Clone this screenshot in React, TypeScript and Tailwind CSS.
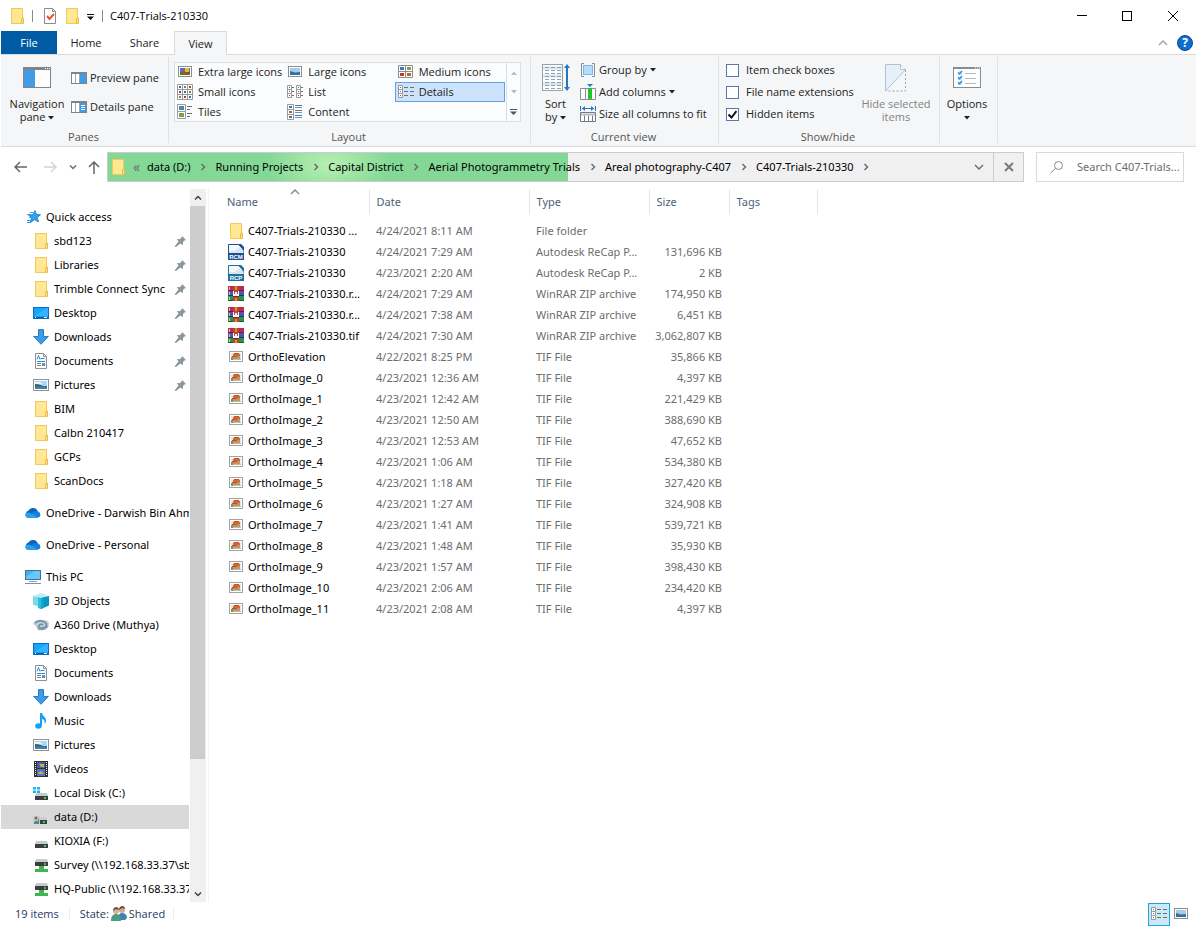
import { Fragment, type ReactNode } from 'react';

/* ---------- icons ---------- */

function FolderIcon() {
  return (
    <svg width="16" height="16" viewBox="0 0 16 16" className="shrink-0">
      <path d="M2.5 0.5h11v15h-11z" fill="#ffe793" stroke="#eecb58" />
      <path d="M12.5 15.500v-4.500l1-1h1v5.500z" fill="#fbdc78" stroke="#e8be48" />
    </svg>
  );
}

function StarIcon() {
  return (
    <svg width="16" height="16" viewBox="0 0 16 16" className="shrink-0">
      <path d="M10 1.500l1.500 4 4 .2-3.200 2.800 1.200 4.500L9.500 10.700l-4.300 3 1.300-4.900L3.500 6l4.500-.3z" fill="#2fa2ee" stroke="#1878c4" strokeWidth=".8" />
      <path d="M5 3.500h3M2 5.500h4M4 8.500h2M2 11.500h3M2 13.500h3" stroke="#2f9be8" strokeWidth="1" />
    </svg>
  );
}

function DesktopIcon() {
  return (
    <svg width="16" height="16" viewBox="0 0 16 16" className="shrink-0">
      <rect x=".5" y="2.500" width="15" height="11" fill="#17a3fb" stroke="#0c6cb5" />
      <path d="M1 11l13-8h1v8z" fill="#35b2ff" />
      <path d="M1 12.500h14" stroke="#0a5c9e" />
      <path d="M2 12.500h1M11 12.500h3" stroke="#fff" />
    </svg>
  );
}

function DownloadIcon() {
  return (
    <svg width="16" height="16" viewBox="0 0 16 16" className="shrink-0">
      <path d="M5.500.5h5v7h4.800L8 15.300.7 7.500h4.800z" fill="#3d9be9" stroke="#2a7cc6" />
    </svg>
  );
}

function DocumentIcon() {
  return (
    <svg width="16" height="16" viewBox="0 0 16 16" className="shrink-0">
      <path d="M2.500.5h8l3 3v12h-11z" fill="#fff" stroke="#8a8f94" />
      <path d="M10.500.5v3h3" fill="none" stroke="#8a8f94" />
      <path d="M4 6.500l1.500-4L7 6.500" fill="none" stroke="#2f87d0" />
      <path d="M7.500 5.500h4M4 8.500h8" stroke="#2f87d0" />
      <path d="M4 10.500h4M4 12.500h4M9 12.500h3" stroke="#7d8388" />
      <rect x="9" y="10" width="3" height="2" fill="#4b9bd8" />
    </svg>
  );
}

function PictureIcon() {
  return (
    <svg width="16" height="16" viewBox="0 0 16 16" className="shrink-0">
      <rect x=".5" y="2.500" width="15" height="11" fill="#fff" stroke="#929292" />
      <rect x="2" y="4" width="12" height="8" fill="#a9d7f7" />
      <path d="M2 5h5l3 2H2z" fill="#e8f5fd" />
      <path d="M2 7l4 0.500 4 1.500h4v1H2z" fill="#33625f" />
      <path d="M2 9.500h12V12H2z" fill="#477fae" />
    </svg>
  );
}

function CloudIcon() {
  return (
    <svg width="16" height="16" viewBox="0 0 16 16" className="shrink-0">
      <path d="M1 9.500a3.500 3.500 0 0 1 2.500-4A5.200 5.200 0 0 1 12.800 6.500L14 10 5 12z" fill="#0a66bd" />
      <path d="M3 12.500l5-5a3.800 3.800 0 0 1 4.800-1A3.300 3.300 0 0 1 14.500 12z" fill="#1681da" />
      <path d="M3.300 13A3 3 0 0 1 .2 9.500c.4-2 3.300-2.600 5-1.500l8.500 4.600a2 2 0 0 1-1 .4z" fill="#28a0ec" />
    </svg>
  );
}

function ThisPcIcon() {
  return (
    <svg width="16" height="16" viewBox="0 0 16 16" className="shrink-0">
      <rect x=".5" y="1.500" width="15" height="9" fill="#3db2fb" stroke="#4a6f8d" />
      <path d="M1 8l8-6h6v8H1z" fill="#66c6ff" />
      <path d="M4 12.500h8" stroke="#8ba3b5" />
      <path d="M0 14.500h16" stroke="#7a93a6" />
    </svg>
  );
}

function CubeIcon() {
  return (
    <svg width="16" height="16" viewBox="0 0 16 16" className="shrink-0">
      <path d="M0 3l8-3 8 3-8 2z" fill="#b8eef5" />
      <path d="M0 3l8 2v11l-3-1V13l-5-1z" fill="#79dbe8" />
      <path d="M5 4.200l3 .8v11l-3-1.200z" fill="#31bfd6" />
      <path d="M16 3L8 5v11l8-3.500z" fill="#0c94ba" />
      <path d="M8 5l3-.8v10.500L8 16z" fill="#0aa9cd" />
    </svg>
  );
}

function A360Icon() {
  return (
    <svg width="16" height="16" viewBox="0 0 16 16" className="shrink-0">
      <path d="M0 7c1-4 5-5 9-4 4-.5 7 1 7 4-.5 4-5 6-9 6-3-.5-4-2-4-4" fill="#bccdd7" />
      <path d="M2 6c3-2.500 7-3 10-.5 3 2 1 5-2 5.500-3 .5-5-.5-4-2 0-1.500 2-2.500 4-1" fill="none" stroke="#6c8798" strokeWidth="1.500" />
      <path d="M5 12c4 1.500 8 0 10-3" fill="none" stroke="#8aa2b1" strokeWidth="1.500" />
    </svg>
  );
}

function MusicIcon() {
  return (
    <svg width="16" height="16" viewBox="0 0 16 16" className="shrink-0">
      <ellipse cx="5.500" cy="13" rx="3.300" ry="2.700" fill="#16a0f5" />
      <path d="M7 0h2c.2 3 4.500 4 4 8-.2 1.500-.8 2.500-1.500 3 .8-3-.8-4.500-2.500-5v7H7z" fill="#16a0f5" />
    </svg>
  );
}

function VideoIcon() {
  return (
    <svg width="16" height="16" viewBox="0 0 16 16" className="shrink-0">
      <rect x="1" y="0" width="14" height="16" fill="#2d2f33" />
      <rect x="4" y="1" width="8" height="6" fill="#3e62b0" />
      <rect x="4" y="8" width="8" height="7" fill="#4c7ac9" />
      <path d="M6 3h5v3H8zM5 12l3-2 3 3H6z" fill="#e0a63c" />
      <path d="M2.500 1v14M13.500 1v14" stroke="#f1f1f1" strokeDasharray="1 1" />
    </svg>
  );
}

function DriveIcon({ kind }: { kind: 'windows' | 'shared' | 'plain' | 'network' }) {
  const y = kind === 'network' ? 2 : 8;
  const x = kind === 'shared' ? 7 : 2;
  const w = kind === 'shared' ? 7 : 13;
  return (
    <svg width="16" height="16" viewBox="0 0 16 16" className="shrink-0">
      {kind === 'windows' && <path d="M0 2h3v2.500H0zM4 2h3v2.500H4zM0 5.500h3V8H0zM4 5.500h3V8H4z" fill="#16b4ee" />}
      {kind === 'shared' && (
        <>
          <rect x="0" y="7" width="7" height="8" fill="#c5cdd0" />
          <circle cx="3" cy="9" r="1.500" fill="#8d5f48" />
          <path d="M1 15c0-4 3-4 3-2l2-4v6z" fill="#4a8d85" />
        </>
      )}
      <path d={`M${x + 1} ${y}h${w - 2}l1 3h-${w}z`} fill="#c8cacb" />
      <rect x={x} y={y + 3} width={w} height="4" fill="#3c3d3e" />
      <rect x={x + w - 4} y={y + 4} width="2" height="2" fill="#35d04c" />
      {kind === 'network' && <path d="M6 9h5v3h4v3H2v-3h4z" fill="#42b553" />}
    </svg>
  );
}

function PinIcon() {
  return (
    <svg width="11" height="11" viewBox="0 0 11 11" className="shrink-0">
      <path d="M7 0l4 4-1.500.5L8 6l-.2 3.200L5.500 7.500 1 11H0v-1l3.500-4.500L1.800 3.200 5 3l1.500-1.500z" fill="#8c979e" />
    </svg>
  );
}

function RecapIcon({ label, color }: { label: string; color: string }) {
  return (
    <svg width="16" height="16" viewBox="0 0 16 16" className="shrink-0">
      <path d="M.5.5h10l4.500 4.500v5H.5z" fill="#f6f9fc" stroke={color} />
      <path d="M1 7c5 1 8-1 10-4l4 3v3H1z" fill="#dae5ed" />
      <path d="M10 0h3l3 3v4z" fill={color} />
      <rect x="0" y="9" width="16" height="7" fill={color} />
      <text x="8" y="15" textAnchor="middle" fontSize="6" fontWeight="700" fontFamily="Liberation Sans, sans-serif" fill="#fff">
        {label}
      </text>
    </svg>
  );
}

function WinrarIcon() {
  return (
    <svg width="16" height="16" viewBox="0 0 16 16" className="shrink-0" shapeRendering="crispEdges">
      <rect x="0" y="0" width="16" height="5" fill="#c5265a" />
      <rect x="0" y="5" width="16" height="5" fill="#4f55b8" />
      <rect x="0" y="10" width="16" height="5" fill="#25944c" />
      <rect x="0" y="4" width="16" height="1" fill="#7a1638" />
      <rect x="0" y="9" width="16" height="1" fill="#2c2f72" />
      <rect x="0" y="14" width="16" height="1" fill="#12602c" />
      <path d="M1.500 1v3M1.500 6v3M1.500 11v3" stroke="#d9c77a" />
      <rect x="5" y="0" width="6" height="15" fill="#b9472b" />
      <rect x="7" y="0" width="2" height="4" fill="#d98a3f" />
      <rect x="7" y="12" width="2" height="3" fill="#d98a3f" />
      <path d="M5 5h1v3h1V6h2v2h1V5h1v5H5z" fill="#fff" />
      <rect x="5" y="10" width="6" height="1" fill="#7d2a22" />
    </svg>
  );
}

function TifIcon() {
  return (
    <svg width="16" height="16" viewBox="0 0 16 16" className="shrink-0" shapeRendering="crispEdges">
      <rect x="1" y="2" width="14" height="11" fill="#a3a3a3" />
      <rect x="2" y="3" width="12" height="9" fill="#fff" />
      <rect x="3" y="4" width="10" height="7" fill="#dfe8ea" />
      <rect x="6" y="4" width="5" height="1" fill="#c4532a" />
      <rect x="5" y="5" width="7" height="2" fill="#d2692f" />
      <rect x="4" y="7" width="5" height="1" fill="#b9532b" />
      <rect x="9" y="7" width="3" height="3" fill="#b99684" />
      <rect x="5" y="8" width="4" height="2" fill="#d98a50" />
      <rect x="3" y="8" width="2" height="3" fill="#6f9a5b" />
      <rect x="5" y="10" width="8" height="1" fill="#b7c2a5" />
    </svg>
  );
}

function UsersIcon() {
  return (
    <svg width="16" height="16" viewBox="0 0 16 16" className="shrink-0">
      <path d="M7 14c0-6 2-7 4-7s5 1 5 5l-2 2z" fill="#3d84b5" />
      <circle cx="11" cy="4" r="3" fill="#d9a98c" />
      <path d="M8 4c0-5 6-5 6-1l-3-1z" fill="#6b4a36" />
      <path d="M0 15c0-5 2-7 5-7s5 2 5 7z" fill="#4c9b82" />
      <circle cx="5" cy="5" r="3" fill="#dcae92" />
      <path d="M2 5c0-5 6-5 6-1L5 3z" fill="#54555c" />
    </svg>
  );
}

// Small thumbnail in a frame, used by the gallery and by the status bar toggle.
function ThumbIcon({ colorful = false }: { colorful?: boolean }) {
  return (
    <svg width="16" height="16" viewBox="0 0 16 16" className="shrink-0">
      <rect x="1.500" y="2.500" width="13" height="10" fill="#fff" stroke="#8e8e8e" />
      <rect x="3" y="4" width="10" height="7" fill={colorful ? '#4278d0' : '#a2cdf3'} />
      {colorful ? (
        <>
          <path d="M3 8h10v3H3z" fill="#4b7b32" />
          <rect x="8" y="4" width="4" height="4" fill="#f0b928" />
          <rect x="5" y="7" width="3" height="3" fill="#d93825" />
          <rect x="10" y="8" width="3" height="2" fill="#a54724" />
        </>
      ) : (
        <path d="M3 7l5 1.500 5-.5v3H3z" fill="#3a6f91" />
      )}
    </svg>
  );
}

function MediumIcon() {
  return (
    <svg width="16" height="16" viewBox="0 0 16 16" className="shrink-0">
      <path d="M.5 1.500h7v6h-7zM7.500 1.500h7v6h-7zM.5 7.500h7v6h-7zM7.500 7.500h7v6h-7z" fill="#fff" stroke="#8e8e8e" />
      <rect x="2" y="3" width="4" height="3" fill="#3d7cb8" />
      <rect x="9" y="3" width="4" height="3" fill="#7fa05c" />
      <rect x="2" y="9" width="4" height="3" fill="#c6362c" />
      <rect x="9" y="9" width="4" height="3" fill="#a8702c" />
    </svg>
  );
}

function SmallIcon() {
  return (
    <svg width="16" height="16" viewBox="0 0 16 16" className="shrink-0">
      <path d="M.5.5h15v15H.5zM5.500.5v15M10.500.5v15M.5 5.500h15M.5 10.500h15" fill="#fff" stroke="#9a9a9a" />
      <path d="M2 3h2M7 8h2M12 13h2" stroke="#2f6eb0" strokeWidth="2" />
      <path d="M7 3h2M12 8h2M2 13h2" stroke="#5d8f5c" strokeWidth="2" />
      <path d="M12 3h2M2 8h2M7 13h2" stroke="#b4372c" strokeWidth="2" />
    </svg>
  );
}

function ListIcon() {
  return (
    <svg width="16" height="16" viewBox="0 0 16 16" className="shrink-0">
      <path d="M.5 1.500h4v12h-4zM.5 5.500h4M.5 9.500h4M9.500 1.500h4v12h-4zM9.500 5.500h4M9.500 9.500h4" fill="#fff" stroke="#9a9a9a" />
      <path d="M5 3.500h2M5 7.500h2M5 11.500h2M14 3.500h2M14 7.500h2M14 11.500h2" stroke="#6e6e6e" />
      <path d="M2 3.500h1M11 3.500h1" stroke="#2f8f56" />
      <path d="M2 7.500h1M11 7.500h1" stroke="#3b79d6" />
      <path d="M2 11.500h1M11 11.500h1" stroke="#d12f2f" />
    </svg>
  );
}

function DetailsIcon() {
  return (
    <svg width="16" height="16" viewBox="0 0 16 16" className="shrink-0">
      <path d="M.5 1.500h4v12h-4zM.5 5.500h4M.5 9.500h4" fill="#fff" stroke="#9a9a9a" />
      <path d="M6 3.500h4M6 7.500h4M6 11.500h4M12 3.500h4M12 7.500h4M12 11.500h4" stroke="#6e6e6e" />
      <path d="M2 3.500h1" stroke="#2f8f56" />
      <path d="M2 7.500h1" stroke="#3b79d6" />
      <path d="M2 11.500h1" stroke="#d12f2f" />
    </svg>
  );
}

function TilesIcon() {
  return (
    <svg width="16" height="16" viewBox="0 0 16 16" className="shrink-0">
      <path d="M.5.5h8v7h-8zM.5 7.500h8v7h-8z" fill="#fff" stroke="#9a9a9a" />
      <rect x="2" y="2" width="5" height="4" fill="#4d84b5" />
      <rect x="2" y="9" width="5" height="4" fill="#8a9a45" />
      <path d="M10 2.500h5M10 5.500h3M10 9.500h5M10 12.500h3" stroke="#6e6e6e" />
    </svg>
  );
}

function ContentIcon() {
  return (
    <svg width="16" height="16" viewBox="0 0 16 16" className="shrink-0">
      <path d="M.5.5h6v15h-6zM.5 5.500h6M.5 10.500h6" fill="#fff" stroke="#9a9a9a" />
      <path d="M2 3h3M2 13h3" stroke="#3f77a8" strokeWidth="2" />
      <path d="M2 8h3" stroke="#9a6a3b" strokeWidth="2" />
      <path d="M8 1.500h7M8 6.500h7M8 11.500h7" stroke="#6e6e6e" />
      <path d="M8 3.500h7M8 8.500h7M8 13.500h7" stroke="#5797e6" />
    </svg>
  );
}

function NavPaneIcon() {
  return (
    <svg width="28" height="22" viewBox="0 0 28 22">
      <rect x=".5" y=".5" width="27" height="20" fill="#fdfdfd" stroke="#808488" />
      <rect x="0" y="0" width="28" height="3" fill="#808488" />
      <path d="M22 1.500h1M24 1.500h1M26 1.500h1" stroke="#fff" />
      <rect x="1" y="3" width="11" height="17" fill="#429be5" />
    </svg>
  );
}

function SidePaneIcon({ lines = false }: { lines?: boolean }) {
  return (
    <svg width="16" height="12" viewBox="0 0 16 12" className="shrink-0">
      <rect x=".5" y=".5" width="15" height="11" fill="#fff" stroke="#808488" />
      <rect x="0" y="0" width="16" height="2" fill="#808488" />
      <path d="M4.500 2v9M8.500 2v9" stroke="#a3a6a9" />
      <rect x="9" y="2" width="6" height="9" fill="#429be5" />
      {lines && <path d="M10 4.500h4M10 6.500h4M10 8.500h4" stroke="#fff" />}
    </svg>
  );
}

function SortIcon() {
  return (
    <svg width="28" height="28" viewBox="0 0 28 28">
      <rect x=".5" y=".5" width="20" height="26" fill="#fff" stroke="#9b9fa3" />
      <path d="M1 4h19M1 12h19M1 20h19" stroke="#cfe8f5" strokeWidth="3" />
      <path d="M3 3.500h16M3 6.500h16M3 9.500h16M3 12.500h16M3 15.500h16M3 18.500h16M3 21.500h16M3 24.500h16" stroke="#9b9fa3" strokeDasharray="4 2" />
      <path d="M25 2v24" stroke="#2478c0" strokeWidth="2" />
      <path d="M22 4l3-4 3 4zM22 23l3 4 3-4z" fill="#2478c0" />
    </svg>
  );
}

function GroupIcon() {
  return (
    <svg width="16" height="16" viewBox="0 0 16 16" className="shrink-0">
      <path d="M4 1.500H1.500v13H4M12 1.500h2.500v13H12" fill="none" stroke="#8b8f93" />
      <rect x="3.500" y="3.500" width="9" height="9" fill="#b4dcfb" stroke="#78b8ec" />
    </svg>
  );
}

function AddColumnIcon() {
  return (
    <svg width="16" height="16" viewBox="0 0 16 16" className="shrink-0">
      <path d="M.5 4.500h15v11H.5zM5.500 4.500v11" fill="#fff" stroke="#8b8f93" />
      <rect x="8" y="4" width="4" height="11" fill="#23c52b" />
      <path d="M7 0h6l-3 3z" fill="#2478c0" />
    </svg>
  );
}

function FitColumnsIcon() {
  return (
    <svg width="16" height="16" viewBox="0 0 16 16" className="shrink-0">
      <path d="M.5 0v5M15.500 0v5M2 2.500h12" stroke="#2478c0" />
      <path d="M5 0L2 2.500 5 5zM11 0l3 2.500L11 5z" fill="#2478c0" />
      <path d="M.5 6.500h15v9H.5zM4.500 9.500v6M8.500 9.500v6M12.500 9.500v6" fill="#fff" stroke="#77797c" />
      <path d="M1 8.500h14" stroke="#b9bcbe" strokeWidth="2" />
    </svg>
  );
}

function HideItemsIcon() {
  return (
    <svg width="22" height="28" viewBox="0 0 22 28">
      <path d="M.5.5h15l5 5L.5 27z" fill="#e6effa" />
      <path d="M.5 27V.5h15l5 5L.5 27" fill="none" stroke="#b3bfd3" />
      <path d="M15.500.5v5h5" fill="#fff" stroke="#b3bfd3" />
      <path d="M20.500 6v21H1" fill="none" stroke="#94a5c0" strokeDasharray="2 2" />
    </svg>
  );
}

function OptionsIcon() {
  return (
    <svg width="28" height="22" viewBox="0 0 28 22">
      <rect x=".5" y=".5" width="27" height="20" fill="#fff" stroke="#8a8c8e" />
      <rect x="0" y="0" width="28" height="2" fill="#8a8c8e" />
      <path d="M22 1h1M24 1h1M26 1h1" stroke="#fff" />
      <path d="M5 4h4v4H5zM5 9h4v4H5zM5 14h4v4H5z" fill="#d4e8f8" />
      <path d="M5 5.500l1.500 1.500L9 4M5 10.500L6.500 12 9 9M5 15.500L6.500 17 9 14" fill="none" stroke="#2f91dc" strokeWidth="1.500" />
      <path d="M12 6.500h11M12 11.500h11M12 16.500h11" stroke="#b7b7b7" />
    </svg>
  );
}

function Caret({ className = 'text-[#222]' }: { className?: string }) {
  return (
    <svg width="6" height="4" viewBox="0 0 6 4" className={`inline-block shrink-0 align-middle ${className}`}>
      <path d="M0 0h6L3 3.500z" fill="currentColor" />
    </svg>
  );
}

function Chevron({ dir, className = 'text-[#6d6d6d]' }: { dir: 'up' | 'down' | 'right'; className?: string }) {
  const paths = { up: 'M1 5.500l3-3 3 3', down: 'M1 2.500l3 3 3-3', right: 'M2.500 1l3 3-3 3' };
  return (
    <svg width="8" height="8" viewBox="0 0 8 8" className={`shrink-0 ${className}`}>
      <path d={paths[dir]} fill="none" stroke="currentColor" strokeWidth="1.500" />
    </svg>
  );
}

// Wider, thinner chevron for the ribbon toggle, the address list and the scroll bar.
function WideChevron({ dir, className = '' }: { dir: 'up' | 'down'; className?: string }) {
  return (
    <svg width="10" height="8" viewBox="0 0 10 8" className={`shrink-0 ${className}`}>
      <path d={dir === 'up' ? 'M1 6l4-4 4 4' : 'M1 2l4 4 4-4'} fill="none" stroke="currentColor" strokeWidth="1.500" />
    </svg>
  );
}

/* ---------- data ---------- */

interface NavItem {
  label: string;
  icon: ReactNode;
  pinned?: boolean;
  selected?: boolean;
}

interface NavGroup {
  root: NavItem;
  items: NavItem[];
}

const navGroups: NavGroup[] = [
  {
    root: { label: 'Quick access', icon: <StarIcon /> },
    items: [
      { label: 'sbd123', icon: <FolderIcon />, pinned: true },
      { label: 'Libraries', icon: <FolderIcon />, pinned: true },
      { label: 'Trimble Connect Sync', icon: <FolderIcon />, pinned: true },
      { label: 'Desktop', icon: <DesktopIcon />, pinned: true },
      { label: 'Downloads', icon: <DownloadIcon />, pinned: true },
      { label: 'Documents', icon: <DocumentIcon />, pinned: true },
      { label: 'Pictures', icon: <PictureIcon />, pinned: true },
      { label: 'BIM', icon: <FolderIcon /> },
      { label: 'Calbn 210417', icon: <FolderIcon /> },
      { label: 'GCPs', icon: <FolderIcon /> },
      { label: 'ScanDocs', icon: <FolderIcon /> },
    ],
  },
  { root: { label: 'OneDrive - Darwish Bin Ahmed', icon: <CloudIcon /> }, items: [] },
  { root: { label: 'OneDrive - Personal', icon: <CloudIcon /> }, items: [] },
  {
    root: { label: 'This PC', icon: <ThisPcIcon /> },
    items: [
      { label: '3D Objects', icon: <CubeIcon /> },
      { label: 'A360 Drive (Muthya)', icon: <A360Icon /> },
      { label: 'Desktop', icon: <DesktopIcon /> },
      { label: 'Documents', icon: <DocumentIcon /> },
      { label: 'Downloads', icon: <DownloadIcon /> },
      { label: 'Music', icon: <MusicIcon /> },
      { label: 'Pictures', icon: <PictureIcon /> },
      { label: 'Videos', icon: <VideoIcon /> },
      { label: 'Local Disk (C:)', icon: <DriveIcon kind="windows" /> },
      { label: 'data (D:)', icon: <DriveIcon kind="shared" />, selected: true },
      { label: 'KIOXIA (F:)', icon: <DriveIcon kind="plain" /> },
      { label: 'Survey (\\\\192.168.33.37\\sbd)', icon: <DriveIcon kind="network" /> },
      { label: 'HQ-Public (\\\\192.168.33.37)', icon: <DriveIcon kind="network" /> },
    ],
  },
];

const crumbs = [
  'data (D:)',
  'Running Projects',
  'Capital District',
  'Aerial Photogrammetry Trials',
  'Areal photography-C407',
  'C407-Trials-210330',
];

const views = [
  { label: 'Extra large icons', icon: <ThumbIcon colorful /> },
  { label: 'Large icons', icon: <ThumbIcon /> },
  { label: 'Medium icons', icon: <MediumIcon /> },
  { label: 'Small icons', icon: <SmallIcon /> },
  { label: 'List', icon: <ListIcon /> },
  { label: 'Details', icon: <DetailsIcon />, active: true },
  { label: 'Tiles', icon: <TilesIcon /> },
  { label: 'Content', icon: <ContentIcon /> },
];

const rcm = <RecapIcon label="RCM" color="#1d4f91" />;
const rcp = <RecapIcon label="RCP" color="#1f6f9f" />;

const files: { name: string; date: string; type: string; size: string; icon: ReactNode }[] = [
  { name: 'C407-Trials-210330 ...', date: '4/24/2021 8:11 AM', type: 'File folder', size: '', icon: <FolderIcon /> },
  { name: 'C407-Trials-210330', date: '4/24/2021 7:29 AM', type: 'Autodesk ReCap P...', size: '131,696 KB', icon: rcm },
  { name: 'C407-Trials-210330', date: '4/23/2021 2:20 AM', type: 'Autodesk ReCap P...', size: '2 KB', icon: rcp },
  { name: 'C407-Trials-210330.r...', date: '4/24/2021 7:29 AM', type: 'WinRAR ZIP archive', size: '174,950 KB', icon: <WinrarIcon /> },
  { name: 'C407-Trials-210330.r...', date: '4/24/2021 7:38 AM', type: 'WinRAR ZIP archive', size: '6,451 KB', icon: <WinrarIcon /> },
  { name: 'C407-Trials-210330.tif', date: '4/24/2021 7:30 AM', type: 'WinRAR ZIP archive', size: '3,062,807 KB', icon: <WinrarIcon /> },
  { name: 'OrthoElevation', date: '4/22/2021 8:25 PM', type: 'TIF File', size: '35,866 KB', icon: <TifIcon /> },
  { name: 'OrthoImage_0', date: '4/23/2021 12:36 AM', type: 'TIF File', size: '4,397 KB', icon: <TifIcon /> },
  { name: 'OrthoImage_1', date: '4/23/2021 12:42 AM', type: 'TIF File', size: '221,429 KB', icon: <TifIcon /> },
  { name: 'OrthoImage_2', date: '4/23/2021 12:50 AM', type: 'TIF File', size: '388,690 KB', icon: <TifIcon /> },
  { name: 'OrthoImage_3', date: '4/23/2021 12:53 AM', type: 'TIF File', size: '47,652 KB', icon: <TifIcon /> },
  { name: 'OrthoImage_4', date: '4/23/2021 1:06 AM', type: 'TIF File', size: '534,380 KB', icon: <TifIcon /> },
  { name: 'OrthoImage_5', date: '4/23/2021 1:18 AM', type: 'TIF File', size: '327,420 KB', icon: <TifIcon /> },
  { name: 'OrthoImage_6', date: '4/23/2021 1:27 AM', type: 'TIF File', size: '324,908 KB', icon: <TifIcon /> },
  { name: 'OrthoImage_7', date: '4/23/2021 1:41 AM', type: 'TIF File', size: '539,721 KB', icon: <TifIcon /> },
  { name: 'OrthoImage_8', date: '4/23/2021 1:48 AM', type: 'TIF File', size: '35,930 KB', icon: <TifIcon /> },
  { name: 'OrthoImage_9', date: '4/23/2021 1:57 AM', type: 'TIF File', size: '398,430 KB', icon: <TifIcon /> },
  { name: 'OrthoImage_10', date: '4/23/2021 2:06 AM', type: 'TIF File', size: '234,420 KB', icon: <TifIcon /> },
  { name: 'OrthoImage_11', date: '4/23/2021 2:08 AM', type: 'TIF File', size: '4,397 KB', icon: <TifIcon /> },
];

/* ---------- sections ---------- */

function TitleBar() {
  return (
    <header className="flex h-[31px] items-center pl-[9px]">
      <FolderIcon />
      <span className="ml-[7px] h-3 w-px bg-[#8a8a8a]" />
      <button type="button" aria-label="Properties" className="ml-[9px]">
        <svg width="16" height="16" viewBox="0 0 16 16">
          <path d="M2.500.5h8l3 3v12h-11z" fill="#fff" stroke="#8a8a8a" />
          <path d="M10.500.5v3h3" fill="none" stroke="#8a8a8a" />
          <path d="M5 8l2.500 3L12 6" fill="none" stroke="#e4572e" strokeWidth="2" />
        </svg>
      </button>
      <button type="button" aria-label="New folder" className="ml-[6px]">
        <FolderIcon />
      </button>
      <button type="button" aria-label="Customize toolbar" className="mt-[3px] ml-[7px]">
        <svg width="7" height="6" viewBox="0 0 7 6">
          <path d="M0 .5h7" stroke="#111" />
          <path d="M0 2.500h7L3.500 6z" fill="#111" />
        </svg>
      </button>
      <span className="ml-[8px] h-3 w-px bg-[#8a8a8a]" />
      <h1 className="ml-[7px]">C407-Trials-210330</h1>
      <div className="ml-auto flex h-full pr-px">
        <button type="button" aria-label="Minimize" className="flex w-[45px] items-center justify-center">
          <svg width="10" height="10" viewBox="0 0 10 10">
            <path d="M0 4.500h10" stroke="#000" />
          </svg>
        </button>
        <button type="button" aria-label="Maximize" className="flex w-[46px] items-center justify-center">
          <svg width="10" height="10" viewBox="0 0 10 10">
            <rect x=".5" y=".5" width="9" height="9" fill="none" stroke="#000" />
          </svg>
        </button>
        <button type="button" aria-label="Close" className="flex w-[46px] items-center justify-center">
          <svg width="10" height="10" viewBox="0 0 10 10">
            <path d="M0 0l10 10M10 0L0 10" stroke="#000" />
          </svg>
        </button>
      </div>
    </header>
  );
}

function Tabs() {
  return (
    <nav className="flex h-[23px] pl-px text-[#222]">
      <button type="button" className="w-[56px] bg-[#005ba5] text-white">File</button>
      <button type="button" className="w-[58px]">Home</button>
      <button type="button" className="w-[59px]">Share</button>
      <button type="button" className="z-10 -mb-px w-[53px] border border-b-0 border-[#dadbdc] bg-[#f5f6f7]">View</button>
      <div className="ml-auto flex items-center gap-[9px] pr-[4px]">
        <button type="button" aria-label="Collapse ribbon">
          <WideChevron dir="up" className="text-[#a5a5a5]" />
        </button>
        <button
          type="button"
          aria-label="Help"
          className="flex h-4 w-4 items-center justify-center rounded-full border border-[#0a4a8c] bg-[#0a6fd0] text-[12px] leading-none font-bold text-white"
        >
          ?
        </button>
      </div>
    </nav>
  );
}

function RibbonGroup({ title, className, children }: { title?: string; className: string; children: ReactNode }) {
  return (
    <section className={`flex shrink-0 flex-col border-r border-[#e0e1e2] ${className}`}>
      <div className="flex flex-1">{children}</div>
      <h2 className="h-[13px] pr-[2px] text-center leading-[13px] text-[#555]">{title}</h2>
    </section>
  );
}

function Ribbon() {
  return (
    <div className="mr-px ml-px flex h-[93px] border-y border-[#dadbdc] bg-[#f5f6f7] pt-[2px] pb-[3px] text-[#222]">
      <RibbonGroup title="Panes" className="w-[168px]">
        <button type="button" className="mt-[10px] flex w-[70px] flex-col items-center pl-[2px]">
          <NavPaneIcon />
          <span className="mt-[8px] leading-[13px]">
            Navigation
            <br />
            pane <Caret />
          </span>
        </button>
        <div className="mt-[11px] flex flex-col items-start gap-[9px] whitespace-nowrap">
          <button type="button" className="flex h-5 items-center gap-[3px]">
            <SidePaneIcon />
            Preview pane
          </button>
          <button type="button" className="flex h-5 items-center gap-[3px]">
            <SidePaneIcon lines />
            Details pane
          </button>
        </div>
      </RibbonGroup>

      <RibbonGroup title="Layout" className="w-[362px]">
        <div className="mt-[5px] ml-[5px] flex h-[60px] w-[347px] border border-[#dcdddf] bg-[#fbfcfd]">
          <div className="-mt-px -ml-px grid w-[331px] grid-cols-3 grid-rows-[20px_20px_20px]">
            {views.map((view) => (
              <button
                key={view.label}
                type="button"
                className={`flex items-center gap-[5px] border pl-[2px] whitespace-nowrap ${
                  view.active ? 'border-[#62a2e4] bg-[#cde3fb]' : 'border-transparent'
                }`}
              >
                {view.icon}
                {view.label}
              </button>
            ))}
          </div>
          <div className="ml-px flex flex-1 flex-col items-center border-l border-[#dcdddf]">
            <button type="button" aria-label="Scroll up" className="flex h-[19px] items-center">
              <Caret className="rotate-180 text-[#b4bcc8]" />
            </button>
            <button type="button" aria-label="Scroll down" className="flex h-5 items-center">
              <Caret className="text-[#b4bcc8]" />
            </button>
            <button type="button" aria-label="More" className="flex h-[19px] items-center">
              <svg width="7" height="6" viewBox="0 0 7 6">
                <path d="M0 .5h7" stroke="#44546f" />
                <path d="M0 2.500h7L3.500 6z" fill="#44546f" />
              </svg>
            </button>
          </div>
        </div>
      </RibbonGroup>

      <RibbonGroup title="Current view" className="w-[188px]">
        <button type="button" className="mt-[7px] flex w-[49px] flex-col items-center">
          <SortIcon />
          <span className="mt-[5px] leading-[13px]">
            Sort
            <br />
            by <Caret />
          </span>
        </button>
        <div className="mt-[2px] flex flex-col items-start whitespace-nowrap">
          <button type="button" className="flex h-[22px] items-center gap-[3px]">
            <GroupIcon />
            Group by <Caret />
          </button>
          <button type="button" className="flex h-[22px] items-center gap-[3px]">
            <AddColumnIcon />
            Add columns <Caret />
          </button>
          <button type="button" className="flex h-[22px] items-center gap-[3px]">
            <FitColumnsIcon />
            Size all columns to fit
          </button>
        </div>
      </RibbonGroup>

      <RibbonGroup title="Show/hide" className="w-[221px]">
        <div className="mt-[2px] flex w-[135px] flex-col pl-[7px] whitespace-nowrap">
          {['Item check boxes', 'File name extensions', 'Hidden items'].map((label) => (
            <label key={label} className="flex h-[22px] items-center gap-[7px]">
              <span className="grid h-[13px] w-[13px] shrink-0 place-items-center">
                <input
                  type="checkbox"
                  defaultChecked={label === 'Hidden items'}
                  className="peer col-start-1 row-start-1 h-[13px] w-[13px] appearance-none border border-[#5b76a8] bg-white"
                />
                <svg width="9" height="9" viewBox="0 0 9 9" className="invisible col-start-1 row-start-1 peer-checked:visible">
                  <path d="M0.500 4.500l3 3L8.500 1" fill="none" stroke="#111" strokeWidth="2" />
                </svg>
              </span>
              {label}
            </label>
          ))}
        </div>
        <button type="button" className="mt-[7px] flex w-[84px] flex-col items-center text-[#838383]">
          <HideItemsIcon />
          <span className="mt-[5px] leading-[13px] whitespace-nowrap">
            Hide selected
            <br />
            items
          </span>
        </button>
      </RibbonGroup>

      <RibbonGroup className="w-[58px]">
        <button type="button" className="mt-[10px] flex w-[54px] flex-col items-center">
          <OptionsIcon />
          <span className="mt-[8px] leading-[13px]">
            Options
            <br />
            <Caret />
          </span>
        </button>
      </RibbonGroup>
    </div>
  );
}

function AddressRow() {
  return (
    <div className="flex h-[41px] items-center pr-[13px] pb-px pl-[14px] font-['Noto_Sans','Open_Sans',sans-serif]">
      <button type="button" aria-label="Back">
        <svg width="13" height="12" viewBox="0 0 13 12">
          <path d="M6 1L1 6l5 5M1 6h12" fill="none" stroke="#666" strokeWidth="1.500" />
        </svg>
      </button>
      <button type="button" aria-label="Forward" className="ml-[17px]">
        <svg width="13" height="12" viewBox="0 0 13 12">
          <path d="M7 1l5 5-5 5M12 6H0" fill="none" stroke="#d4d4d4" strokeWidth="1.500" />
        </svg>
      </button>
      <button type="button" aria-label="Recent locations" className="ml-[12px]">
        <Chevron dir="down" />
      </button>
      <button type="button" aria-label="Up" className="ml-[11px]">
        <svg width="12" height="13" viewBox="0 0 12 13">
          <path d="M1 6l5-5 5 5M6 1v12" fill="none" stroke="#666" strokeWidth="1.500" />
        </svg>
      </button>
      <nav
        aria-label="Address"
        className="ml-[7px] flex h-[30px] min-w-0 flex-1 items-center border border-[#cccccc] bg-[#f0f0f0] bg-[radial-gradient(ellipse_62px_34px_at_221px_12px,#b8f0b4,#84d895)] bg-[length:460px_100%] bg-no-repeat pl-[2px] whitespace-nowrap"
      >
        <FolderIcon />
        <span className="w-[21px] text-center text-[14px] text-[#6d6d6d]">«</span>
        {crumbs.map((crumb) => (
          <Fragment key={crumb}>
            <a href="#" className="text-black">{crumb}</a>
            <span className="flex w-[25px] shrink-0 justify-center">
              <Chevron dir="right" />
            </span>
          </Fragment>
        ))}
        <button type="button" aria-label="Previous locations" className="ml-auto flex h-full w-[30px] items-center justify-center border-r border-[#cccccc]">
          <WideChevron dir="down" className="text-[#6d6d6d]" />
        </button>
        <button type="button" aria-label="Stop" className="flex h-full w-[29px] items-center justify-center">
          <svg width="10" height="10" viewBox="0 0 10 10">
            <path d="M1 1l8 8M9 1L1 9" stroke="#7a7a7a" strokeWidth="2" />
          </svg>
        </button>
      </nav>
      <form className="ml-[12px] flex h-[30px] w-[148px] items-center border border-[#d9d9d9] pl-[13px]">
        <svg width="14" height="13" viewBox="0 0 14 13" className="shrink-0">
          <circle cx="8.500" cy="4.500" r="4" fill="none" stroke="#888" />
          <path d="M5.500 7.500L.5 12" stroke="#888" />
        </svg>
        <input
          type="text"
          aria-label="Search"
          placeholder="Search C407-Trials..."
          className="ml-[13px] w-full min-w-0 outline-none placeholder:text-[#6d6d6d]"
        />
      </form>
    </div>
  );
}

function NavRow({ item, root = false }: { item: NavItem; root?: boolean }) {
  return (
    <a
      href="#"
      className={`ml-px flex h-6 items-center gap-[5px] overflow-hidden whitespace-nowrap ${root ? 'pl-[24px]' : 'pl-[32px]'} ${
        item.pinned ? 'pr-[3px]' : ''
      } ${item.selected ? 'bg-[#d9d9d9]' : ''}`}
    >
      {item.icon}
      <span className={item.pinned ? 'flex-1' : ''}>{item.label}</span>
      {item.pinned && <PinIcon />}
    </a>
  );
}

function Sidebar() {
  return (
    <aside className="flex w-[209px] shrink-0 border-r border-[#f3f3f3]">
      <div className="flex w-[189px] shrink-0 flex-col gap-2 pt-[17px]">
        {navGroups.map((group) => (
          <div key={group.root.label}>
            <NavRow item={group.root} root />
            {group.items.map((item) => (
              <NavRow key={item.label} item={item} />
            ))}
          </div>
        ))}
      </div>
      <div className="mt-px ml-px flex w-4 flex-col bg-[#f0f0f0]">
        <button type="button" aria-label="Scroll up" className="flex h-[17px] items-center justify-center">
          <Chevron dir="up" className="text-[#404040]" />
        </button>
        <div className="flex flex-1 flex-col">
          <div className="h-[81.5%] w-[15px] bg-[#cdcdcd]" />
        </div>
        <button type="button" aria-label="Scroll down" className="flex h-[17px] items-center justify-center">
          <Chevron dir="down" className="text-[#404040]" />
        </button>
      </div>
    </aside>
  );
}

function FileTable() {
  return (
    <main className="min-w-0 flex-1 pt-px pl-[10px]">
      <table className="w-[598px] table-fixed border-collapse text-left">
        <colgroup>
          <col className="w-[150px]" />
          <col className="w-[160px]" />
          <col className="w-[120px]" />
          <col className="w-[80px]" />
          <col className="w-[88px]" />
        </colgroup>
        <thead>
          <tr className="h-[26px] text-[#4c607a]">
            {['Name', 'Date', 'Type', 'Size', 'Tags'].map((title) => (
              <th key={title} scope="col" className="relative border-r border-[#e5e5e5] pl-[7px] font-normal first:pl-[8px]">
                {title}
                {title === 'Name' && (
                  <WideChevron dir="up" className="absolute -top-px left-[71px] text-[#8a8a8a]" />
                )}
              </th>
            ))}
          </tr>
        </thead>
        <tbody>
          <tr className="h-[5px]" aria-hidden="true" />
          {files.map((file, index) => (
            <tr key={index} className="h-[21px] text-[#6d6d6d]">
              <td className="pl-[9px]">
                <div className="flex items-center gap-1 whitespace-nowrap text-black">
                  {file.icon}
                  <span>{file.name}</span>
                </div>
              </td>
              <td className="pl-[7px] whitespace-nowrap">{file.date}</td>
              <td className="pl-[7px] whitespace-nowrap">{file.type}</td>
              <td className="pr-[7px] text-right whitespace-nowrap">{file.size}</td>
              <td />
            </tr>
          ))}
        </tbody>
      </table>
    </main>
  );
}

function StatusBar() {
  return (
    <footer className="flex h-[24px] items-center pl-[15px] text-[#1e3a5f]">
      <span>19 items</span>
      <span className="ml-[10px] h-3 w-px bg-[#ededed]" />
      <span className="ml-[10px] flex items-center gap-[2px]">
        State: <UsersIcon /> Shared
      </span>
      <span className="ml-[8px] h-3 w-px bg-[#ededed]" />
      <div className="ml-auto flex items-center gap-[3px] pr-[8px]">
        <button type="button" aria-label="Details view" className="flex h-[23px] w-[22px] items-center justify-center border border-[#26a0da] bg-[#cbe8f6]">
          <DetailsIcon />
        </button>
        <button type="button" aria-label="Large icons view">
          <ThumbIcon />
        </button>
      </div>
    </footer>
  );
}

export default function App() {
  return (
    <div className="flex min-h-screen flex-col bg-white font-['Open_Sans','Noto_Sans',sans-serif] text-[11px] leading-4 text-black">
      <TitleBar />
      <Tabs />
      <Ribbon />
      <AddressRow />
      <div className="flex flex-1 font-['Noto_Sans','Open_Sans',sans-serif]">
        <Sidebar />
        <FileTable />
      </div>
      <StatusBar />
    </div>
  );
}
